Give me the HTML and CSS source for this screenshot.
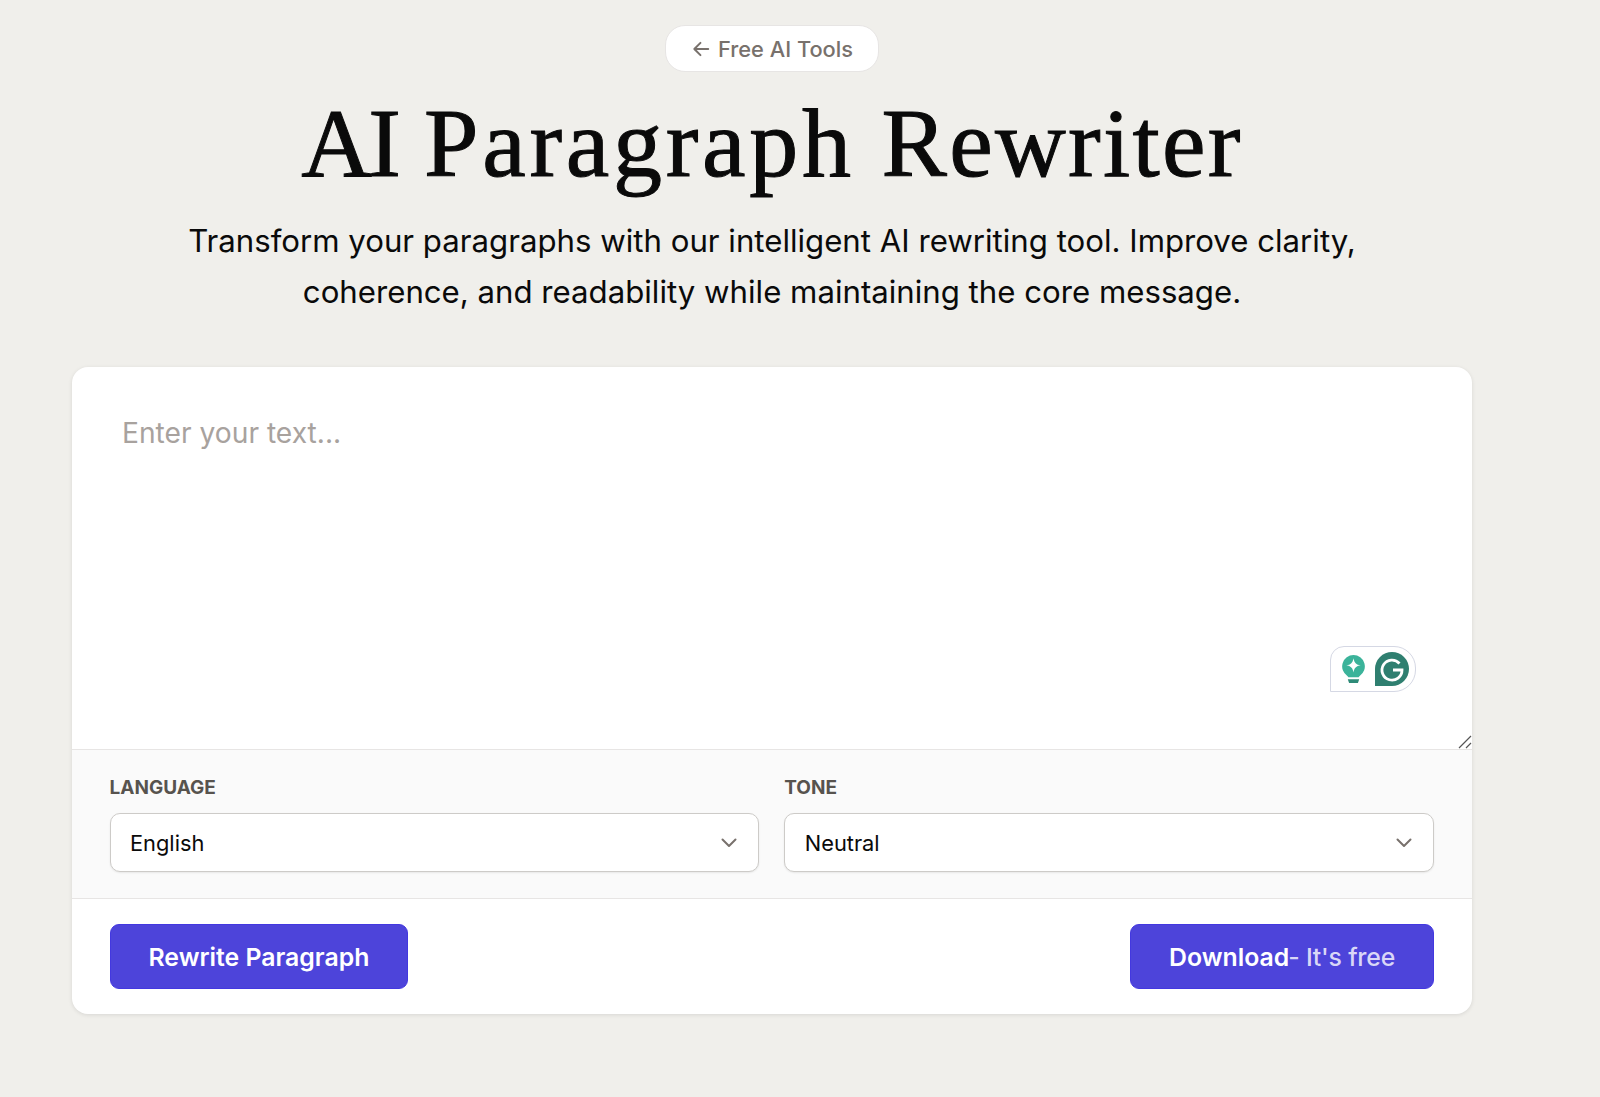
FILE: index.html
```html
<!DOCTYPE html>
<html lang="en">
<head>
<meta charset="utf-8">
<title>AI Paragraph Rewriter</title>
<link rel="stylesheet" href="styles.css">
</head>
<body>
<main class="page">
  <a class="back" href="#"><span class="back-arrow">
    <svg viewBox="0 0 18 18" width="20" height="20" fill="none" stroke="#78716c" stroke-width="1.800" stroke-linecap="round" stroke-linejoin="round"><path d="M15.500 9H3M8.500 3.500 3 9l5.500 5.500"/></svg>
  </span>Free AI Tools</a>
  <h1 class="title"><span class="title-ai">AI</span> <span class="title-main">Paragraph</span> Rewriter</h1>
  <p class="lead">Transform your paragraphs with our intelligent AI rewriting tool. Improve clarity, coherence, and readability while maintaining the core message.</p>
  <section class="card">
    <div class="editor">
      <textarea class="input" placeholder="Enter your text..."></textarea>
      <div class="grammarly">
        <svg viewBox="0 0 24 30" width="25" height="31"><path d="M12 1a11 11 0 0 1 6 20.200c-.6.4-1 .9-1 1.300H7c0-.4-.4-.9-1-1.300A11 11 0 0 1 12 1z" fill="#3bb39a"/><path d="M12 4c.8 4.500 2.500 6.200 7 7-4.500.8-6.200 2.500-7 7-.8-4.500-2.500-6.200-7-7 4.500-.8 6.200-2.500 7-7z" fill="#fff"/><path d="M6.500 24.500h11l-1.200 3.500H7.700z" fill="#2e8b78"/></svg>
        <svg viewBox="0 0 34 34" width="34" height="34"><path d="M17 0a17 17 0 0 1 0 34H0V17A17 17 0 0 1 17 0z" fill="#2f7f70"/><path d="M24.500 11.500A10 10 0 1 0 27 18H18" fill="none" stroke="#fff" stroke-width="2.800"/></svg>
      </div>
      <svg class="grip" viewBox="0 0 14 14" width="14" height="14" fill="none" stroke="#555" stroke-width="1.200"><path d="M1 13 13 1M8 13l5-5"/></svg>
    </div>
    <div class="options">
      <div class="field">
        <label class="label">LANGUAGE</label>
        <div class="select">English
          <svg class="chev" viewBox="0 0 16 10" width="16" height="10" fill="none" stroke="#78716c" stroke-width="2" stroke-linecap="round" stroke-linejoin="round"><path d="M1.500 1.500 8 8l6.500-6.500"/></svg>
        </div>
      </div>
      <div class="field">
        <label class="label">TONE</label>
        <div class="select">Neutral
          <svg class="chev" viewBox="0 0 16 10" width="16" height="10" fill="none" stroke="#78716c" stroke-width="2" stroke-linecap="round" stroke-linejoin="round"><path d="M1.500 1.500 8 8l6.500-6.500"/></svg>
        </div>
      </div>
    </div>
    <div class="actions">
      <button class="btn">Rewrite Paragraph</button>
      <button class="btn">Download<span class="free">- It's free</span></button>
    </div>
  </section>
</main>
</body>
</html>
```
FILE: styles.css
```css
* { box-sizing: border-box; }
html, body { margin: 0; height: 100%; }
body {
  background: #f0efeb;
  font-family: Inter, "Liberation Sans", sans-serif;
  color: #0a0a0a;
}
.page {
  width: 1544px;
  height: 1097px;
  padding: 25px 72px 0;
  display: flex;
  flex-direction: column;
  align-items: center;
}
.back {
  display: flex;
  align-items: center;
  gap: 7px;
  height: 47px;
  padding: 0 25px;
  background: #fff;
  border: 1.500px solid #e7e5e4;
  border-radius: 20px;
  color: #78716c;
  font-size: 21.800px;
  font-weight: 500;
  text-decoration: none;
}
.back-arrow { display: flex; }
.title {
  margin: 19px 0 0;
  font-family: "Liberation Serif", serif;
  font-weight: 400;
  font-size: 98px;
  line-height: 104px;
  letter-spacing: 2.300px;
  color: #0a0a0a;
  -webkit-text-stroke: 1px #0a0a0a;
  white-space: nowrap;
}
.title-ai { letter-spacing: -3.700px; }
.title-main { letter-spacing: 3.700px; }
.lead {
  margin: 21px 0 0;
  width: 1300px;
  padding: 0 40px;
  text-align: center;
  font-size: 31.200px;
  line-height: 51px;
  color: #0a0a0a;
}
.card {
  width: 1400px;
  margin-top: 49px;
  background: #fff;
  border-radius: 16px;
  box-shadow: 0 1px 4px rgba(0, 0, 0, .1);
  overflow: hidden;
}
.editor {
  position: relative;
  height: 382px;
}
.input {
  display: block;
  width: 100%;
  height: 100%;
  border: 0;
  outline: 0;
  padding: 49px 50px;
  background: transparent;
  font-family: inherit;
  font-size: 28.200px;
  color: #0a0a0a;
  resize: none;
}
.input::placeholder { color: #a8a29e; opacity: 1; }
.grammarly {
  position: absolute;
  left: 1258px;
  top: 279px;
  width: 86px;
  height: 46px;
  display: flex;
  align-items: center;
  gap: 9px;
  padding-left: 10px;
  background: #fff;
  border: 1.500px solid #d5d8e4;
  border-radius: 14px 22px 22px 0;
}
.grip {
  position: absolute;
  right: 0;
  bottom: 0;
}
.options {
  display: grid;
  grid-template-columns: 1fr 1fr;
  gap: 25px;
  padding: 26px 38px 26px 37.500px;
  background: #fafafa;
  border-top: 1.500px solid #e7e5e4;
  border-bottom: 1.500px solid #e7e5e4;
}
.label {
  display: block;
  font-size: 19px;
  line-height: 24px;
  font-weight: 700;
  color: #57534e;
  margin-bottom: 13px;
}
.select {
  display: flex;
  align-items: center;
  justify-content: space-between;
  height: 59px;
  padding: 0 21px 0 19.500px;
  background: #fff;
  border: 1.500px solid #cdcbc8;
  border-radius: 10px;
  box-shadow: 0 1px 2px rgba(0, 0, 0, .08);
  font-size: 21.800px;
}
.actions {
  display: flex;
  justify-content: space-between;
  padding: 25px 38px 25px 37.500px;
}
.btn {
  height: 65px;
  padding: 0 38px;
  border: 1px solid #4338e0;
  border-radius: 9px;
  background: #4d44da;
  color: #fff;
  font-family: inherit;
  font-size: 24.800px;
  font-weight: 600;
}
.free { color: #d9d7f7; font-weight: 500; letter-spacing: -.2px; margin-left: -1px; }
```
